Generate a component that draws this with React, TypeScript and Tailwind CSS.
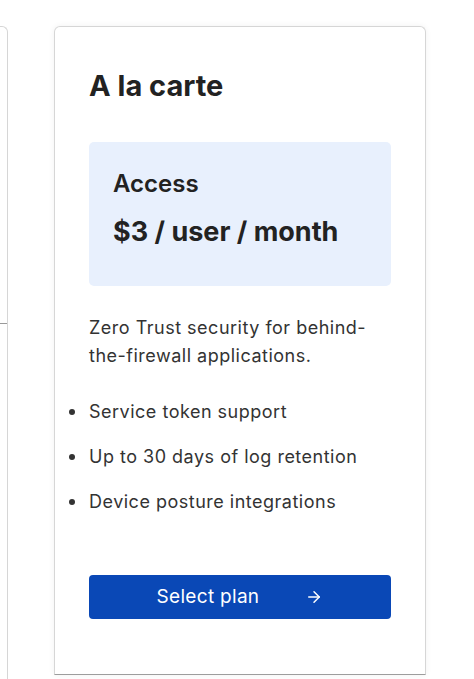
import { ArrowRight } from "lucide-react";

export default function App() {
  const features = [
    "Service token support",
    "Up to 30 days of log retention",
    "Device posture integrations",
  ];

  return (
    <div className="flex h-[679px] w-[474px] items-start gap-[46px] overflow-hidden bg-white pt-[26px] font-['Inter',sans-serif]">
      {/* Neighbour card, mostly off screen */}
      <div className="flex h-[680px] w-[8px] shrink-0 flex-col rounded-tr-md border-r border-t border-[#d6d6d6]">
        <div className="h-[296px]" />
        <div className="border-t border-[#9a9a9a]" />
      </div>

      {/* Plan card */}
      <div className="flex h-[649px] w-[372px] shrink-0 flex-col rounded-t-md border border-[#d6d6d6] border-b-[#9d9d9d] px-[34px] pt-[41px] shadow-[0_0_6px_rgba(0,0,0,0.06)]">
        <h2 className="text-[29px] font-bold leading-[36px] text-[#222]">A la carte</h2>

        <div className="mt-[38px] rounded-[5px] bg-[#e8f0fd] px-[24px] pb-[37px] pt-[28px]">
          <h3 className="text-[24px] font-semibold leading-[28px] text-[#222]">Access</h3>
          <p className="mt-[17px] text-[27px] font-bold leading-[34px] text-[#222]">
            $3 / user / month
          </p>
        </div>

        <p className="mt-[28px] text-[18px] leading-[28px] tracking-[0.5px] text-[#333]">
          Zero Trust security for behind-the-firewall applications.
        </p>

        <ul className="mt-[28px] flex flex-col gap-[17px]">
          {features.map((item) => (
            <li key={item} className="relative text-[18px] leading-[28px] tracking-[0.5px] text-[#333]">
              <span className="absolute left-[-20px] top-[11px] h-[6px] w-[6px] rounded-full bg-[#333]" />
              {item}
            </li>
          ))}
        </ul>

        <button className="mt-[59px] flex h-[44px] w-full items-center justify-center gap-[46px] rounded-[4px] bg-[#0a48b6] text-[19px] tracking-[0.3px] text-white">
          <span>Select plan</span>
          <ArrowRight className="h-[18px] w-[18px]" strokeWidth={2} />
        </button>
      </div>
    </div>
  );
}
